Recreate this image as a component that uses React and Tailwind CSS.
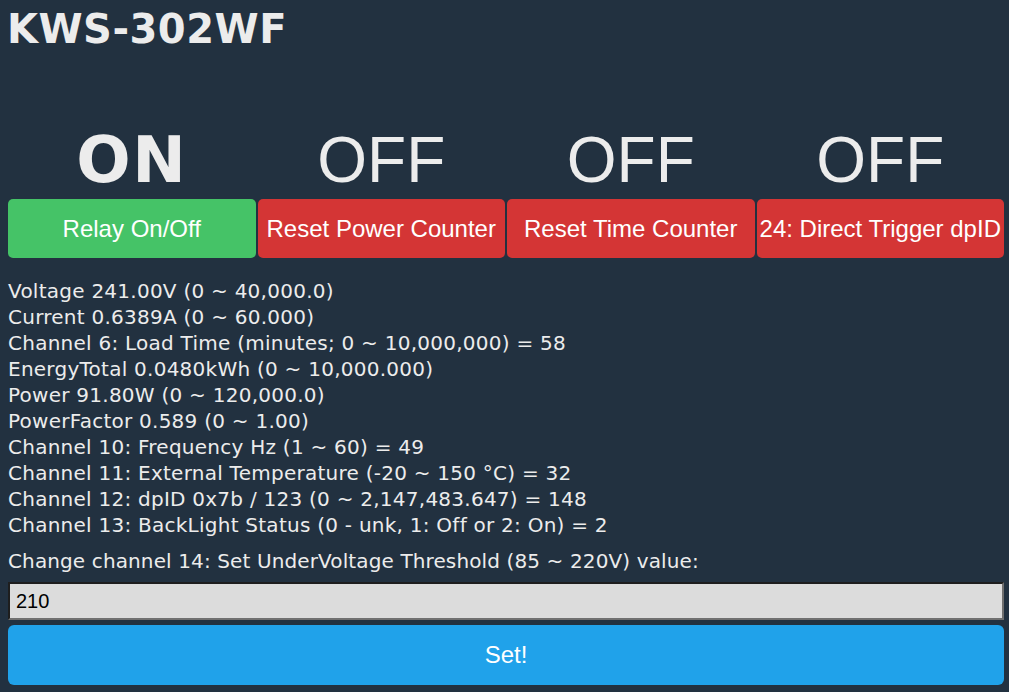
import React from "react";

const lines = [
  "Voltage 241.00V (0 ~ 40,000.0)",
  "Current 0.6389A (0 ~ 60.000)",
  "Channel 6: Load Time (minutes; 0 ~ 10,000,000) = 58",
  "EnergyTotal 0.0480kWh (0 ~ 10,000.000)",
  "Power 91.80W (0 ~ 120,000.0)",
  "PowerFactor 0.589 (0 ~ 1.00)",
  "Channel 10: Frequency Hz (1 ~ 60) = 49",
  "Channel 11: External Temperature (-20 ~ 150 °C) = 32",
  "Channel 12: dpID 0x7b / 123 (0 ~ 2,147,483.647) = 148",
  "Channel 13: BackLight Status (0 - unk, 1: Off or 2: On) = 2",
];

export default function App() {
  return (
    <div className="min-h-[692px] w-full bg-[#223140] text-[#ececec] pl-[8px] pr-[5px] pt-[5px] pb-[6px] font-['DejaVu_Sans',sans-serif]">
      <div className="h-[48px] leading-[48px] text-[40px] font-bold tracking-[0.5px] -ml-[1px] font-['DejaVu_Sans',sans-serif]">
        KWS-302WF
      </div>
      <div className="mt-[71px] grid grid-cols-4 gap-[2px] h-[72px]">
        <div className="text-center leading-[72px] text-[64px] font-bold tracking-[1.5px] font-['DejaVu_Sans',sans-serif]">ON</div>
        <div className="text-center leading-[72px] text-[64px] font-['Liberation_Sans',Arial,sans-serif]">OFF</div>
        <div className="text-center leading-[72px] text-[64px] font-['Liberation_Sans',Arial,sans-serif]">OFF</div>
        <div className="text-center leading-[72px] text-[64px] font-['Liberation_Sans',Arial,sans-serif]">OFF</div>
      </div>
      <div className="mt-[3px] grid grid-cols-4 gap-[2px] font-['Liberation_Sans',Arial,sans-serif] text-[24px] text-white">
        <button className="h-[59px] rounded-[5px] bg-[#45c367] whitespace-nowrap">Relay On/Off</button>
        <button className="h-[59px] rounded-[5px] bg-[#d43535] whitespace-nowrap">Reset Power Counter</button>
        <button className="h-[59px] rounded-[5px] bg-[#d43535] whitespace-nowrap">Reset Time Counter</button>
        <button className="h-[59px] rounded-[5px] bg-[#d43535] whitespace-nowrap overflow-hidden">24: Direct Trigger dpID</button>
      </div>
      <div className="mt-[20px] text-[20px] leading-[26px] tracking-[0.25px]">
        {lines.map((l, i) => (
          <div key={i}>{l}</div>
        ))}
      </div>
      <div className="mt-[10px] text-[20px] leading-[26px] tracking-[0.12px]">
        Change channel 14: Set UnderVoltage Threshold (85 ~ 220V) value:
      </div>
      <input
        defaultValue="210"
        className="mt-[8px] block w-[996px] h-[38px] bg-[#dcdcdc] text-black text-[20px] pl-[6px] font-['Liberation_Sans',Arial,sans-serif] border-2 border-t-[#1e1e1e] border-l-[#1e1e1e] border-b-[#707070] border-r-[#707070] outline-none"
      />
      <button className="mt-[5px] block w-[996px] h-[60px] rounded-[6px] bg-[#20a2ea] text-white text-[24px] font-['Liberation_Sans',Arial,sans-serif]">
        Set!
      </button>
    </div>
  );
}
